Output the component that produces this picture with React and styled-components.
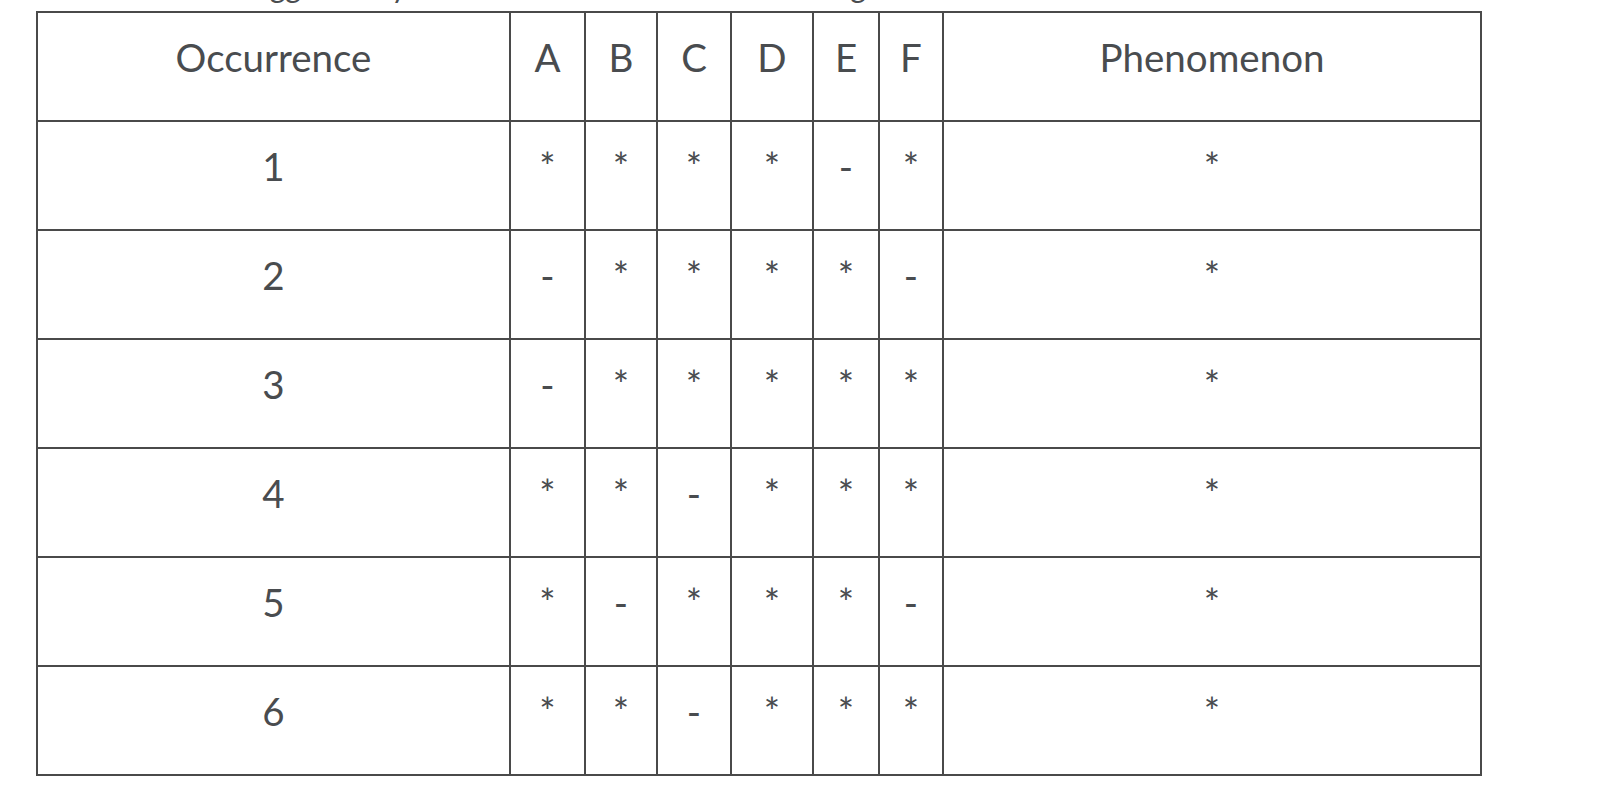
import styled, { createGlobalStyle } from "styled-components";

const GlobalStyle = createGlobalStyle`
  html, body {
    margin: 0;
    padding: 0;
    background: #ffffff;
  }
  body {
    font-family: Lato, "Open Sans", sans-serif;
    color: #494c4f;
  }
`;

const columns = [
  { label: "Occurrence", width: 473 },
  { label: "A", width: 75 },
  { label: "B", width: 72 },
  { label: "C", width: 74 },
  { label: "D", width: 82 },
  { label: "E", width: 66 },
  { label: "F", width: 64 },
  { label: "Phenomenon", width: 538 },
];

const rows = [
  ["1", "*", "*", "*", "*", "-", "*", "*"],
  ["2", "-", "*", "*", "*", "*", "-", "*"],
  ["3", "-", "*", "*", "*", "*", "*", "*"],
  ["4", "*", "*", "-", "*", "*", "*", "*"],
  ["5", "*", "-", "*", "*", "*", "-", "*"],
  ["6", "*", "*", "-", "*", "*", "*", "*"],
];

// the sentence above the table is cut off by the screenshot, only descenders show
const words = [
  { text: "suggest", gap: 204 },
  { text: "they", gap: 8 },
  { text: "along", gap: 388 },
];

function App() {
  return (
    <>
      <GlobalStyle />
      <Page>
        <Clipped>
          <Line>
            {words.map((w) => (
              <Word key={w.text} $gap={w.gap}>
                {w.text}
              </Word>
            ))}
          </Line>
        </Clipped>
        <Grid>
          <colgroup>
            {columns.map((c) => (
              <col key={c.label} style={{ width: c.width }} />
            ))}
          </colgroup>
          <thead>
            <tr>
              {columns.map((c) => (
                <Cell as="th" key={c.label}>
                  {c.label}
                </Cell>
              ))}
            </tr>
          </thead>
          <tbody>
            {rows.map((r, i) => (
              <tr key={i}>
                {r.map((v, j) => (
                  <Cell key={j}>{v}</Cell>
                ))}
              </tr>
            ))}
          </tbody>
        </Grid>
      </Page>
    </>
  );
}

export default App;

const Page = styled.div`
  width: 1610px;
  height: 806px;
  padding-left: 36px;
  box-sizing: border-box;
  overflow: hidden;
`;

const Clipped = styled.div`
  height: 11px;
  display: flex;
  align-items: flex-end;
  overflow: hidden;
`;

const Line = styled.div`
  display: flex;
  font-size: 30px;
  line-height: 36px;
  white-space: nowrap;
  transform: translateY(-7px);
  color: #494c4f;
`;

const Word = styled.span`
  margin-left: ${(p) => p.$gap}px;
`;

const Grid = styled.table`
  border-collapse: collapse;
  table-layout: fixed;
  width: 1446px;

  tr {
    height: 109px;
  }
`;

const Cell = styled.td`
  border: 2px solid #4a4a4a;
  padding: 21px 0 0;
  vertical-align: top;
  text-align: center;
  font-size: 38.5px;
  font-weight: 400;
  line-height: 1.2;
  color: #494c4f;
`;
